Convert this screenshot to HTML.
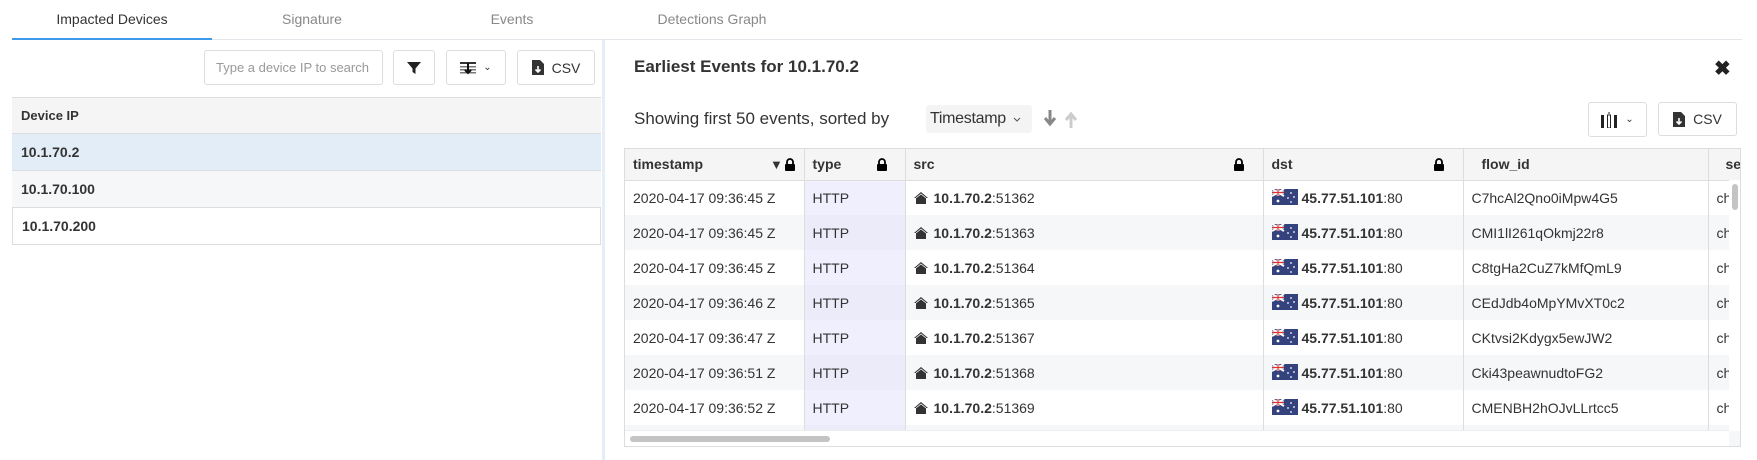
<!DOCTYPE html>
<html><head><meta charset="utf-8"><style>
*{box-sizing:border-box;margin:0;padding:0}
body{width:1757px;height:460px;overflow:hidden;background:#fff;font-family:"Liberation Sans",sans-serif;color:#333;position:relative}
.abs{position:absolute}
.tab{position:absolute;top:0;height:39px;width:200px;text-align:center;line-height:38px;font-size:14px;color:#888}
.btn{position:absolute;border:1px solid #ddd;border-radius:3px;background:#fff;display:flex;align-items:center;justify-content:center;font-size:14px;color:#333}
.lrow{position:absolute;left:12px;width:589px;height:37px;border-bottom:1px solid #ddd;font-weight:bold;font-size:14px;line-height:36px;padding-left:9px}
table{border-collapse:collapse;table-layout:fixed;font-size:14px}
td,th{height:35px;white-space:nowrap;overflow:hidden;text-align:left;padding-left:8px;border-right:1px solid #ddd}
th{height:31px;background:#f5f5f5;font-size:14px;border-bottom:1px solid #ddd;position:relative}
tr.e td{background:#f6f7f9}
td.ty{background:#f0effd}
tr.e td.ty{background:#ecebfa}
.lock{position:absolute;top:9px;width:10px;height:13px}
b{font-weight:bold}
</style></head><body>
<div class="tab" style="left:12px;color:#333">Impacted Devices</div>
<div class="tab" style="left:212px">Signature</div>
<div class="tab" style="left:412px">Events</div>
<div class="tab" style="left:612px">Detections Graph</div>
<div class="abs" style="left:12px;top:39px;width:1730px;height:1px;background:#e2e6ea"></div>
<div class="abs" style="left:12px;top:38px;width:200px;height:2px;background:#3d9be9"></div>
<div class="abs" style="left:602px;top:40px;width:3px;height:420px;background:#e4eef8"></div>

<div class="btn" style="left:204px;top:50px;width:179px;height:35px;justify-content:flex-start;padding-left:11px;color:#999;font-size:13px">Type a device IP to search</div>
<div class="btn" style="left:393px;top:50px;width:42px;height:35px"><svg width="14" height="14" viewBox="0 0 14 14"><path d="M0 1h14L8.5 7.5V13L5.5 11V7.5z" fill="#222"/></svg></div>
<div class="btn" style="left:446px;top:50px;width:60px;height:35px"><svg width="16" height="14" viewBox="0 0 16 14"><rect x="0" y="1" width="16" height="2" fill="#333"/><rect x="0" y="5" width="16" height="1.5" fill="#777"/><rect x="0" y="8" width="16" height="1.5" fill="#777"/><rect x="0" y="11" width="16" height="1.5" fill="#777"/><path d="M8 2v9M5 9l3 3 3-3" stroke="#111" stroke-width="2" fill="none"/></svg><span style="font-size:10px;margin-left:7px">&#8964;</span></div>
<div class="btn" style="left:517px;top:50px;width:78px;height:35px"><svg width="12" height="15" viewBox="0 0 12 15"><path d="M0 0h8l4 4v11H0z" fill="#333"/><path d="M6 6v6M3.5 9.5L6 12l2.5-2.5" stroke="#fff" stroke-width="1.6" fill="none"/></svg><span style="margin-left:8px">CSV</span></div>

<div class="abs" style="left:12px;top:97px;width:589px;height:148px;border:1px solid #ddd;border-bottom:none"></div>
<div class="lrow" style="top:97px;height:37px;background:#f5f5f5;border-top:1px solid #ddd;font-size:13px">Device IP</div>
<div class="lrow" style="top:134px;background:#e3edf7">10.1.70.2</div>
<div class="lrow" style="top:171px;background:#f6f7f9">10.1.70.100</div>
<div class="lrow" style="top:208px;background:#fff;border-left:1px solid #ddd;border-right:1px solid #ddd">10.1.70.200</div>

<div class="abs" style="left:634px;top:57px;font-size:17px;font-weight:bold">Earliest Events for 10.1.70.2</div>
<div class="abs" style="left:1714px;top:56px;font-size:20px;font-weight:bold;color:#222">&#10006;</div>
<div class="abs" style="left:634px;top:109px;font-size:17px">Showing first 50 events, sorted by</div>
<div class="abs" style="left:926px;top:105px;width:106px;height:28px;background:#f4f4f4;border-radius:3px;font-size:16px;line-height:28px;padding-left:4px;letter-spacing:-0.3px">Timestamp<svg style="position:absolute;right:11px;top:12px" width="8" height="5" viewBox="0 0 8 5"><path d="M1 1l3 3 3-3" stroke="#555" fill="none"/></svg></div>
<svg class="abs" style="left:1044px;top:110px" width="40" height="18" viewBox="0 0 40 18"><path d="M6 0v12M1 8l5 6 5-6" stroke="#888" stroke-width="3" fill="none"/><path d="M27 18V6M22 10l5-6 5 6" stroke="#ccc" stroke-width="3" fill="none"/></svg>
<div class="btn" style="left:1588px;top:102px;width:59px;height:35px"><svg width="16" height="16" viewBox="0 0 16 16"><rect x="0" y="3" width="3" height="13" fill="#222"/><rect x="6.5" y="3" width="3" height="13" fill="none" stroke="#222" stroke-width="1"/><rect x="13" y="3" width="3" height="13" fill="#222"/><path d="M8 0v2" stroke="#222"/></svg><span style="font-size:10px;margin-left:8px">&#8964;</span></div>
<div class="btn" style="left:1658px;top:102px;width:79px;height:34px"><svg width="12" height="15" viewBox="0 0 12 15"><path d="M0 0h8l4 4v11H0z" fill="#333"/><path d="M6 6v6M3.5 9.5L6 12l2.5-2.5" stroke="#fff" stroke-width="1.6" fill="none"/></svg><span style="margin-left:8px">CSV</span></div>

<div class="abs" style="left:624px;top:148px;width:1117px;height:299px;border:1px solid #ddd;overflow:hidden">
<svg width="0" height="0" style="position:absolute"><defs>
<symbol id="lk" viewBox="0 0 10 13"><path d="M2 6V4a3 3 0 0 1 6 0v2" stroke="#000" stroke-width="1.8" fill="none"/><rect x="0" y="6" width="10" height="7" rx="1" fill="#000"/></symbol>
<symbol id="hm" viewBox="0 0 14 12"><path d="M7 0L0 6h2v6h10V6h2z" fill="#333"/><path d="M2 6L7 2l5 4" stroke="#fff" stroke-width="0.8" fill="none"/></symbol>
<symbol id="au" viewBox="0 0 26 16"><rect width="26" height="16" fill="#34427e"/><path d="M0 0l12 7M12 0L0 7" stroke="#fff" stroke-width="2"/><path d="M6 0v7M0 3.5h12" stroke="#fff" stroke-width="2.5"/><path d="M6 0v7M0 3.5h12" stroke="#d33" stroke-width="1.2"/><circle cx="6" cy="12" r="1.4" fill="#fff"/><circle cx="19" cy="4" r="0.9" fill="#fff"/><circle cx="22" cy="8" r="0.9" fill="#fff"/><circle cx="16" cy="9" r="0.9" fill="#fff"/><circle cx="19" cy="13" r="0.9" fill="#fff"/></symbol>
</defs></svg>
<table style="width:1140px">
<colgroup><col style="width:179px"><col style="width:101px"><col style="width:358px"><col style="width:200px"><col style="width:245px"><col style="width:57px"></colgroup>
<tr><th>timestamp<span style="position:absolute;left:145px;top:8px;font-size:13px">&#9660;</span><svg class="lock" style="left:160px"><use href="#lk"/></svg></th><th>type<svg class="lock" style="left:72px"><use href="#lk"/></svg></th><th>src<svg class="lock" style="left:328px"><use href="#lk"/></svg></th><th>dst<svg class="lock" style="left:170px"><use href="#lk"/></svg></th><th style="padding-left:18px;border-left:1px solid #ddd">flow_id</th><th style="padding-left:17px">ser</th></tr>
<tr><td>2020-04-17 09:36:45 Z</td><td class="ty">HTTP</td><td><svg width="14" height="12" style="vertical-align:-1px;margin-right:6px"><use href="#hm"/></svg><b>10.1.70.2</b>:51362</td><td><svg width="26" height="16" style="vertical-align:-2px;margin-right:4px"><use href="#au"/></svg><b>45.77.51.101</b>:80</td><td style="border-left:1px solid #ddd">C7hcAl2Qno0iMpw4G5</td><td>ch</td></tr>
<tr class="e"><td>2020-04-17 09:36:45 Z</td><td class="ty">HTTP</td><td><svg width="14" height="12" style="vertical-align:-1px;margin-right:6px"><use href="#hm"/></svg><b>10.1.70.2</b>:51363</td><td><svg width="26" height="16" style="vertical-align:-2px;margin-right:4px"><use href="#au"/></svg><b>45.77.51.101</b>:80</td><td style="border-left:1px solid #ddd">CMI1lI261qOkmj22r8</td><td>ch</td></tr>
<tr><td>2020-04-17 09:36:45 Z</td><td class="ty">HTTP</td><td><svg width="14" height="12" style="vertical-align:-1px;margin-right:6px"><use href="#hm"/></svg><b>10.1.70.2</b>:51364</td><td><svg width="26" height="16" style="vertical-align:-2px;margin-right:4px"><use href="#au"/></svg><b>45.77.51.101</b>:80</td><td style="border-left:1px solid #ddd">C8tgHa2CuZ7kMfQmL9</td><td>ch</td></tr>
<tr class="e"><td>2020-04-17 09:36:46 Z</td><td class="ty">HTTP</td><td><svg width="14" height="12" style="vertical-align:-1px;margin-right:6px"><use href="#hm"/></svg><b>10.1.70.2</b>:51365</td><td><svg width="26" height="16" style="vertical-align:-2px;margin-right:4px"><use href="#au"/></svg><b>45.77.51.101</b>:80</td><td style="border-left:1px solid #ddd">CEdJdb4oMpYMvXT0c2</td><td>ch</td></tr>
<tr><td>2020-04-17 09:36:47 Z</td><td class="ty">HTTP</td><td><svg width="14" height="12" style="vertical-align:-1px;margin-right:6px"><use href="#hm"/></svg><b>10.1.70.2</b>:51367</td><td><svg width="26" height="16" style="vertical-align:-2px;margin-right:4px"><use href="#au"/></svg><b>45.77.51.101</b>:80</td><td style="border-left:1px solid #ddd">CKtvsi2Kdygx5ewJW2</td><td>ch</td></tr>
<tr class="e"><td>2020-04-17 09:36:51 Z</td><td class="ty">HTTP</td><td><svg width="14" height="12" style="vertical-align:-1px;margin-right:6px"><use href="#hm"/></svg><b>10.1.70.2</b>:51368</td><td><svg width="26" height="16" style="vertical-align:-2px;margin-right:4px"><use href="#au"/></svg><b>45.77.51.101</b>:80</td><td style="border-left:1px solid #ddd">Cki43peawnudtoFG2</td><td>ch</td></tr>
<tr><td>2020-04-17 09:36:52 Z</td><td class="ty">HTTP</td><td><svg width="14" height="12" style="vertical-align:-1px;margin-right:6px"><use href="#hm"/></svg><b>10.1.70.2</b>:51369</td><td><svg width="26" height="16" style="vertical-align:-2px;margin-right:4px"><use href="#au"/></svg><b>45.77.51.101</b>:80</td><td style="border-left:1px solid #ddd">CMENBH2hOJvLLrtcc5</td><td>ch</td></tr>
<tr class="e"><td></td><td class="ty"></td><td></td><td></td><td style="border-left:1px solid #ddd"></td><td></td></tr>
</table>
<div class="abs" style="left:0;top:281px;width:1104px;height:17px;background:#fff;border-top:1px solid #eee"></div>
<div class="abs" style="left:5px;top:287px;width:200px;height:6px;border-radius:3px;background:#c4c4c4"></div>
<div class="abs" style="left:1104px;top:31px;width:12px;height:251px;background:#fff"></div>
<div class="abs" style="left:1107px;top:35px;width:6px;height:26px;border-radius:3px;background:#c4c4c4"></div>
</div>
</body></html>
